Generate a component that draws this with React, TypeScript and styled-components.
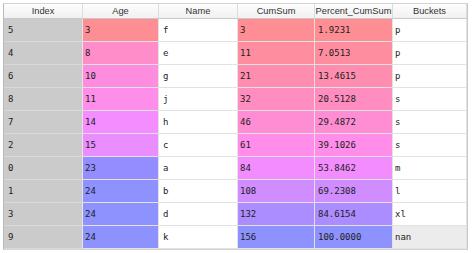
import { Fragment } from 'react';
import styled, { createGlobalStyle } from 'styled-components';

const GlobalStyle = createGlobalStyle`
    html, body {
        margin: 0;
        padding: 0;
        background: #ffffff;
    }
`;

type Row = {
    index: string;
    age: number;
    name: string;
    cumsum: number;
    percent: number;
    bucket: string;
};

const rows: Row[] = [
    { index: '5', age: 3, name: 'f', cumsum: 3, percent: 1.9231, bucket: 'p' },
    { index: '4', age: 8, name: 'e', cumsum: 11, percent: 7.0513, bucket: 'p' },
    { index: '6', age: 10, name: 'g', cumsum: 21, percent: 13.4615, bucket: 'p' },
    { index: '8', age: 11, name: 'j', cumsum: 32, percent: 20.5128, bucket: 's' },
    { index: '7', age: 14, name: 'h', cumsum: 46, percent: 29.4872, bucket: 's' },
    { index: '2', age: 15, name: 'c', cumsum: 61, percent: 39.1026, bucket: 's' },
    { index: '0', age: 23, name: 'a', cumsum: 84, percent: 53.8462, bucket: 'm' },
    { index: '1', age: 24, name: 'b', cumsum: 108, percent: 69.2308, bucket: 'l' },
    { index: '3', age: 24, name: 'd', cumsum: 132, percent: 84.6154, bucket: 'xl' },
    { index: '9', age: 24, name: 'k', cumsum: 156, percent: 100.0, bucket: 'nan' },
];

const columns = ['Index', 'Age', 'Name', 'CumSum', 'Percent_CumSum', 'Buckets'];

// hue runs from red (low) to blue (high), painted at 60% over white
function heat(value: number, min: number, max: number) {
    const hue = (0.66 + (0.33 * (max - value)) / (max - min)) * 360;
    const s = 0.72;
    const v = 255;
    const c = v * s;
    const x = c * (1 - Math.abs(((hue / 60) % 2) - 1));
    const m = v - c;
    let r = 0, g = 0, b = 0;
    if (hue < 60) [r, g, b] = [c, x, 0];
    else if (hue < 120) [r, g, b] = [x, c, 0];
    else if (hue < 180) [r, g, b] = [0, c, x];
    else if (hue < 240) [r, g, b] = [0, x, c];
    else if (hue < 300) [r, g, b] = [x, 0, c];
    else [r, g, b] = [c, 0, x];
    const mix = (ch: number) => Math.round((ch + m) * 0.62 + 255 * 0.38);
    return `rgb(${mix(r)}, ${mix(g)}, ${mix(b)})`;
}

const Page = styled.div`
    padding: 3px 0 0 3px;
    width: 474px;
    height: 253px;
    box-sizing: border-box;
`;

const Grid = styled.div`
    display: grid;
    grid-template-columns: 79px 76px 79px 77px 78px 74px;
    grid-template-rows: 15px repeat(10, 23px);
    width: max-content;
    border-left: 1px solid #b9b9b9;
    border-top: 1px solid #d4d4d4;
    border-bottom: 1px solid #d4d4d4;
    border-right: 1px solid #c8c8c8;
`;

const HeaderCell = styled.div`
    display: flex;
    align-items: center;
    justify-content: center;
    background: linear-gradient(#fdfdfd, #f1f1f1);
    border-right: 1px solid #dcdcdc;
    border-bottom: 1px solid #c9c9c9;
    box-sizing: border-box;
    font-family: "Liberation Sans", Arial, sans-serif;
    font-size: 9.3px;
    color: #333333;
    white-space: nowrap;

    &:last-child {
        border-right: none;
    }
`;

const Cell = styled.div<{ $bg: string; $pad?: number }>`
    display: flex;
    align-items: center;
    padding-left: ${(p) => p.$pad ?? 3}px;
    background: ${(p) => p.$bg};
    border-right: 1px solid #e2e2e2;
    border-bottom: 1px solid #e2e2e2;
    box-sizing: border-box;
    font-family: "DejaVu Sans Mono", "Liberation Mono", monospace;
    font-size: 9px;
    color: #222222;
    white-space: nowrap;
`;

const IndexCell = styled(Cell)`
    border-bottom-color: #d9d9d9;
    border-right-color: #e6e6e6;
`;

export default function App() {
    const range = (list: number[]) => [Math.min(...list), Math.max(...list)] as const;
    const [aMin, aMax] = range(rows.map((r) => r.age));
    const [sMin, sMax] = range(rows.map((r) => r.cumsum));
    const [pMin, pMax] = range(rows.map((r) => r.percent));

    return (
        <>
            <GlobalStyle />
            <Page>
                <Grid>
                    {columns.map((c) => (
                        <HeaderCell key={c}>{c}</HeaderCell>
                    ))}
                    {rows.map((r) => (
                        <Fragment key={r.index}>
                            <IndexCell $bg="#cbcbcb" $pad={4}>{r.index}</IndexCell>
                            <Cell $bg={heat(r.age, aMin, aMax)} $pad={2}>{r.age}</Cell>
                            <Cell $bg="#ffffff" $pad={4}>{r.name}</Cell>
                            <Cell $bg={heat(r.cumsum, sMin, sMax)} $pad={2}>{r.cumsum}</Cell>
                            <Cell $bg={heat(r.percent, pMin, pMax)} $pad={3}>{r.percent.toFixed(4)}</Cell>
                            <Cell $bg={r.bucket === 'nan' ? '#ececec' : '#ffffff'} $pad={2}>{r.bucket}</Cell>
                        </Fragment>
                    ))}
                </Grid>
            </Page>
        </>
    );
}
